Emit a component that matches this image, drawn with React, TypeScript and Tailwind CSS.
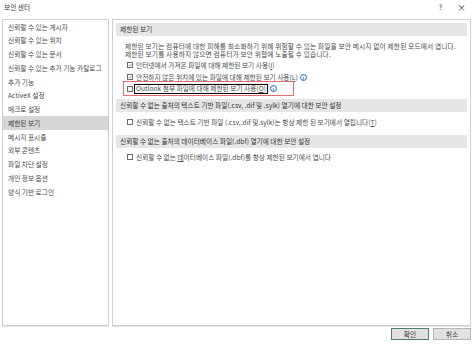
import React from 'react'

const menu = [
  '신뢰할 수 있는 게시자',
  '신뢰할 수 있는 위치',
  '신뢰할 수 있는 문서',
  '신뢰할 수 있는 추가 기능 카탈로그',
  '추가 기능',
  'ActiveX 설정',
  '매크로 설정',
  '제한된 보기',
  '메시지 표시줄',
  '외부 콘텐츠',
  '파일 차단 설정',
  '개인 정보 옵션',
  '양식 기반 로그인',
]

function Box({ checked }: { checked?: boolean }) {
  return (
    <span className="w-[6px] h-[6px] shrink-0 border border-[#6b6b6b] bg-white flex items-center justify-center">
      {checked && (
        <svg viewBox="0 0 10 10" className="w-[6px] h-[6px]">
          <path d="M1.8 5.2 L4.1 7.5 L8.4 2.6" fill="none" stroke="#333" strokeWidth="1.4" />
        </svg>
      )}
    </span>
  )
}

function Info() {
  return (
    <span className="ml-[2px] w-[7px] h-[7px] shrink-0 rounded-full border border-[#1c6fc2] text-[#1c6fc2] text-[5px] font-bold flex items-center justify-center">
      i
    </span>
  )
}

function Header({ children, className }: { children: React.ReactNode; className: string }) {
  return (
    <div className={`mx-[3px] h-[13px] bg-[#e6e6e6] flex items-center pl-[4px] text-[#333] ${className}`}>
      {children}
    </div>
  )
}

function Row({ checked, children, className }: { checked?: boolean; children: React.ReactNode; className?: string }) {
  return (
    <div className={`h-[12px] flex items-center pl-[14px] gap-[3px] ${className ?? ''}`}>
      <Box checked={checked} />
      <span className="flex items-center whitespace-pre">{children}</span>
    </div>
  )
}

export default function App() {
  return (
    <div className="w-[474px] h-[344px] bg-white overflow-hidden flex flex-col text-[6.7px] leading-none text-[#4a4a4a] font-['Noto_Sans_CJK_KR','Noto_Sans',sans-serif]">
      {/* title bar */}
      <div className="h-[19px] pb-[5px] flex items-center justify-between pl-[4px] pr-[8px] text-[#333]">
        <span>보안 센터</span>
        <div className="flex items-center gap-[15px]">
          <span className="text-[7px]">?</span>
          <span className="text-[9px]">×</span>
        </div>
      </div>

      <div className="flex gap-[3px] pl-[2px] pr-[3px] h-[307px]">
        {/* left nav */}
        <div className="w-[107px] border border-[#cfcfcf] shadow-[0_1px_0_#e4e4e4] flex flex-col">
          {menu.map((m) => (
            <div
              key={m}
              className={`h-[13.75px] shrink-0 flex items-center pl-[5px] whitespace-nowrap ${m === '제한된 보기' ? 'bg-[#d6d6d6] text-[#333]' : ''}`}
            >
              {m}
            </div>
          ))}
        </div>

        {/* right content */}
        <div className="flex-1 border border-[#cfcfcf] shadow-[0_1px_0_#e4e4e4] flex flex-col">
          <Header className="mt-[3px] h-[12px]">제한된 보기</Header>
          <div className="mt-[6px] pl-[12px] leading-[8px] tracking-[0.15px] whitespace-nowrap">
            <div>제한된 보기는 컴퓨터에 대한 피해를 최소화하기 위해 위험할 수 있는 파일을 보안 메시지 없이 제한된 모드에서 엽니다.</div>
            <div>제한된 보기를 사용하지 않으면 컴퓨터가 보안 위협에 노출될 수 있습니다.</div>
          </div>
          <Row checked className="mt-[1px]">
            인터넷에서 가져온 파일에 대해 제한된 보기 사용(<span className="underline">I</span>)
          </Row>
          <Row checked>
            안전하지 않은 위치에 있는 파일에 대해 제한된 보기 사용(<span className="underline">L</span>)
            <Info />
          </Row>
          <div className="-mt-[2px] ml-[10px] w-[171px] h-[15px] border border-[#e07070] flex items-center pl-[3px]">
            <Box />
            <span className="ml-[1px] h-[10px] border border-black px-[1px] flex items-center whitespace-pre">
              Outlook 첨부 파일에 대해 제한된 보기 사용(<span className="underline">O</span>)
            </span>
            <Info />
          </div>

          <Header className="mt-[3px] whitespace-nowrap">신뢰할 수 없는 출처의 텍스트 기반 파일(.csv, .dif 및 .sylk) 열기에 대한 보안 설정</Header>
          <Row className="mt-[4px]">
            신뢰할 수 없는 텍스트 기반 파일 (.csv,.dif 및.sylk)는 항상 제한 된 보기에서 열립니다(<span className="underline">T</span>)
          </Row>

          <Header className="mt-[7px] whitespace-nowrap">신뢰할 수 없는 출처의 데이터베이스 파일(.dbf) 열기에 대한 보안 설정</Header>
          <Row className="mt-[3px]">
            신뢰할 수 없는 <span className="underline">데</span>이터베이스 파일(.dbf)를 항상 제한된 보기에서 엽니다
          </Row>
        </div>
      </div>

      {/* buttons */}
      <div className="flex justify-end gap-[4px] pr-[3px] pt-[2px]">
        <button className="w-[38px] h-[12px] bg-[#e1e1e1] border border-[#4d7f70] text-[#333] flex items-center justify-center">
          확인
        </button>
        <button className="w-[38px] h-[12px] bg-[#e1e1e1] border border-[#b5b5b5] text-[#333] flex items-center justify-center">
          취소
        </button>
      </div>
    </div>
  )
}
